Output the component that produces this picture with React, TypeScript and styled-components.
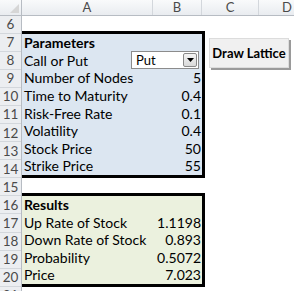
import React from "react";
import styled, { createGlobalStyle } from "styled-components";

const GlobalStyle = createGlobalStyle`
  html, body {
    margin: 0;
    padding: 0;
    background: #ffffff;
  }
  body {
    font-family: Lato, "Open Sans", "Liberation Sans", sans-serif;
    font-size: 14px;
    color: #000000;
  }
`;

interface Row {
  label: string;
  value?: string;
  bold?: boolean;
  combo?: boolean;
}

const parameters: Row[] = [
  { label: "Parameters", bold: true },
  { label: "Call or Put", combo: true },
  { label: "Number of Nodes", value: "5" },
  { label: "Time to Maturity", value: "0.4" },
  { label: "Risk-Free Rate", value: "0.1" },
  { label: "Volatility", value: "0.4" },
  { label: "Stock Price", value: "50" },
  { label: "Strike Price", value: "55" },
];

const results: Row[] = [
  { label: "Results", bold: true },
  { label: "Up Rate of Stock", value: "1.1198" },
  { label: "Down Rate of Stock", value: "0.893" },
  { label: "Probability", value: "0.5072" },
  { label: "Price", value: "7.023" },
];

const rowNumbers = [6, 7, 8, 9, 10, 11, 12, 13, 14, 15, 16, 17, 18, 19, 20, 21];

const App = () => {
  return (
    <>
      <GlobalStyle />
      <S.Sheet>
        <S.ColumnBar>
          <S.Corner>
            <svg width="10" height="10" viewBox="0 0 10 10">
              <polygon points="10,1 10,10 1,10" fill="#d6d6d6" />
            </svg>
          </S.Corner>
          <S.ColumnName>A</S.ColumnName>
          <S.ColumnName>B</S.ColumnName>
          <S.ColumnName>C</S.ColumnName>
          <S.ColumnName>D</S.ColumnName>
        </S.ColumnBar>

        <S.Body>
          <S.RowBar>
            {rowNumbers.map((n) => (
              <S.RowNumber key={n} $first={n === 6}>
                {n}
              </S.RowNumber>
            ))}
          </S.RowBar>

          <S.Cells>
            <S.BlankRow />
            <S.Panel $fill="#dce6f1">
              {parameters.map((row) => (
                <S.Line key={row.label}>
                  <S.Label $bold={row.bold}>{row.label}</S.Label>
                  {row.combo && (
                    <S.Combo>
                      <span>Put</span>
                      <S.ComboArrow>
                        <svg width="7" height="4" viewBox="0 0 7 4">
                          <polygon points="0,0 7,0 3.5,4" fill="#000" />
                        </svg>
                      </S.ComboArrow>
                    </S.Combo>
                  )}
                  {row.value && <S.Value>{row.value}</S.Value>}
                </S.Line>
              ))}
            </S.Panel>
            <S.BlankRow />
            <S.Panel $fill="#ebf1de">
              {results.map((row) => (
                <S.Line key={row.label}>
                  <S.Label $bold={row.bold}>{row.label}</S.Label>
                  {row.value && <S.Value>{row.value}</S.Value>}
                </S.Line>
              ))}
            </S.Panel>
          </S.Cells>
        </S.Body>

        <S.Button>Draw Lattice</S.Button>
      </S.Sheet>
    </>
  );
};

const S = {
  Sheet: styled.div`
    position: relative;
    width: 294px;
    height: 291px;
    overflow: hidden;
    background: #ffffff;
  `,

  ColumnBar: styled.div`
    display: grid;
    grid-template-columns: 22px 131px 49px 57px 57px;
    height: 16px;
    background: linear-gradient(#f9fafb, #e9ecf0);
    border-bottom: 1px solid #b7bcc3;
    box-sizing: border-box;
  `,

  Corner: styled.div`
    display: flex;
    align-items: flex-end;
    justify-content: flex-end;
    padding: 0 2px 2px 0;
    border-right: 1px solid #b7bcc3;
    box-sizing: border-box;
  `,

  ColumnName: styled.div`
    display: flex;
    align-items: center;
    justify-content: center;
    border-right: 1px solid #d3d7dc;
    color: #4a4a4a;
    font-size: 13px;
    line-height: 15px;
  `,

  Body: styled.div`
    display: grid;
    grid-template-columns: 22px 1fr;
  `,

  RowBar: styled.div`
    display: flex;
    flex-direction: column;
    background: #eceef1;
    border-right: 1px solid #b7bcc3;
    box-sizing: border-box;
  `,

  RowNumber: styled.div<{ $first?: boolean }>`
    display: flex;
    align-items: center;
    justify-content: center;
    height: ${({ $first }) => ($first ? "17.5px" : "18.1px")};
    flex-shrink: 0;
    border-bottom: 1px solid #d3d7dc;
    box-sizing: border-box;
    color: #4a4a4a;
    font-size: 13.5px;
  `,

  Cells: styled.div`
    display: flex;
    flex-direction: column;
  `,

  BlankRow: styled.div`
    height: 15px;
  `,

  Panel: styled.div<{ $fill: string }>`
    display: flex;
    flex-direction: column;
    width: 180px;
    background: ${({ $fill }) => $fill};
    border: 3px solid #000000;
    border-left: none;
  `,

  Line: styled.div`
    position: relative;
    display: flex;
    align-items: center;
    justify-content: space-between;
    height: 17.6px;
    padding: 0 1px 0 2px;
  `,

  Label: styled.span<{ $bold?: boolean }>`
    font-size: 14px;
    font-weight: ${({ $bold }) => ($bold ? 700 : 400)};
    white-space: nowrap;
  `,

  Value: styled.span`
    font-size: 14px;
  `,

  Combo: styled.div`
    display: flex;
    align-items: center;
    justify-content: space-between;
    width: 68px;
    height: 18px;
    margin-right: 2px;
    padding-left: 4px;
    background: #ffffff;
    border: 1px solid #8c8c8c;
    box-sizing: border-box;
    font-size: 13px;
  `,

  ComboArrow: styled.div`
    display: flex;
    align-items: center;
    justify-content: center;
    width: 14px;
    height: 14px;
    margin-right: 1px;
    background: linear-gradient(#f4f4f4, #d9d9d9);
    border: 1px solid #8a8a8a;
    border-radius: 2px;
    box-sizing: border-box;
  `,

  Button: styled.button`
    position: absolute;
    top: 38px;
    left: 209px;
    width: 80px;
    height: 30px;
    padding: 0;
    background: #f0f0f0;
    border: 1px solid #dcdcdc;
    box-shadow: 2px 2px 0 #9a9a9a;
    font-family: Lato, "Open Sans", "Liberation Sans", sans-serif;
    font-size: 13px;
    font-weight: 700;
    color: #000000;
  `,
};

export default App;
